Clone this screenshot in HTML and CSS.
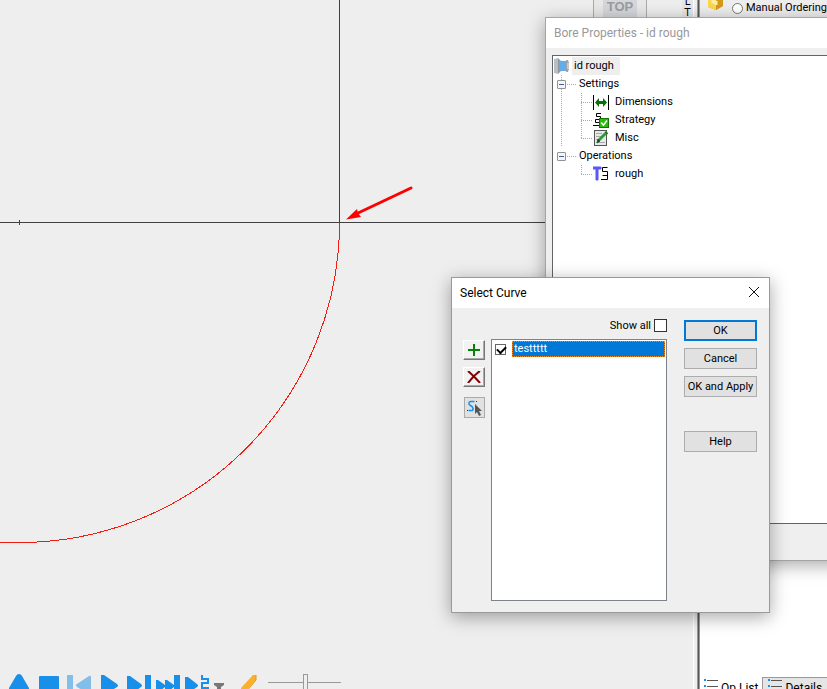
FILE: index.html
```
<!DOCTYPE html>
<html lang="en">
<head>
    <meta charset="UTF-8">
    <title>Bore Properties - id rough</title>
    <link rel="stylesheet" href="styles.css">
</head>
<body>
    <div class="app">
        <main class="viewport">
            <svg class="drawing" aria-hidden="true">
                <g stroke="#404040" fill="none" shape-rendering="crispEdges">
                    <path d="M0 222.5H700M339.5 0V222M19.5 220V225"/>
                </g>
                <path d="M339.5 222.5A320 320 0 0 1 19.5 542.5H0" fill="none" stroke="#f21c10" shape-rendering="crispEdges"/>
                <path d="M411 188L357 213.500" stroke="#f00" stroke-width="3" stroke-linecap="round"/>
                <path d="M346 219.500L357 209L358 213L361 217Z" fill="#f00"/>
            </svg>
            <div class="view-bar">
                <button class="view-cube">TOP</button>
                <div class="strip"><span>L</span><span>T</span></div>
            </div>
            <div class="playback">
                <button aria-label="Home"><svg width="20" height="24"><path d="M10 0Q12 0 13 2L20 14V17H0V14L7 2Q8 0 10 0Z"/></svg></button>
                <button aria-label="Stop"><svg width="20" height="24"><rect y="2" width="20" height="20" rx="1"/></svg></button>
                <button aria-label="Rewind" disabled><svg width="24" height="24"><path d="M0 1h6v20H0zM24 3V21L10 13Q8 11 10 10L22 2Q24 1 24 3Z"/></svg></button>
                <button aria-label="Play"><svg width="17" height="24"><path d="M0 1H3L16 10Q18 12 16 13L2 22H0Z"/></svg></button>
                <button aria-label="Step"><svg width="24" height="24"><path d="M0 2H3L14 10Q16 12 14 13L2 22H0ZM18 1h6v20h-6z"/></svg></button>
                <button aria-label="Fast forward"><svg width="24" height="24"><path d="M0 6H2L9 11V6H11L18 11V1H24V21H18V13L9 20V13L0 20Z"/></svg></button>
                <button aria-label="Play operation"><svg width="24" height="24"><path d="M0 3H3L12 10Q14 12 12 13L2 20H0Z"/><path d="M16 2H18M17 1V5H23V9H17V14H24" fill="none" stroke="#188fe8" stroke-width="2"/></svg></button>
                <button aria-label="Tool"><svg width="10" height="24"><path d="M0 9h10v2L7 13v6H3V13L0 11z" fill="#777"/></svg></button>
                <button class="pencil" aria-label="Edit"><svg width="16" height="24"><path d="M12 1H15V6L4 18H0V14Z" fill="#fbb02d"/><path d="M15 1V6L5 18" fill="none" stroke="#e29612"/></svg></button>
                <input class="speed" type="range" min="0" max="100" value="52" aria-label="Speed">
            </div>
        </main>
        <div class="splitter"></div>
        <aside class="panel">
            <div class="ordering">
                <svg width="17" height="18" viewBox="0 0 17 18"><path d="M1 3L9 0L16 3V13L9 17L1 14Z" fill="#e7ae20"/><path d="M1 3L9 6V17L1 14Z" fill="#fcd64b"/><path d="M9 6L16 3V13L9 17Z" fill="#d59a1a"/><path d="M6 3V9Q8 10 9 8V12" fill="none" stroke="#fff0a8" stroke-width="3"/></svg>
                <label><input type="radio" name="order">Manual Ordering</label>
            </div>
            <div class="operations"></div>
            <div class="tabs">
                <button class="tab active"><svg width="14" height="12"><path d="M0 0h2v2H0zM0 6h2v2H0z" fill="#188fe8"/><path d="M3 1.500h11M3 7.500h11" stroke="#555"/></svg>Op List</button>
                <button class="tab"><svg width="14" height="12"><path d="M0 0h2v2H0zM0 6h2v2H0z" fill="#188fe8"/><path d="M3 1.500h11M3 7.500h11" stroke="#555"/></svg>Details</button>
            </div>
        </aside>
    </div>

    <section class="window bore">
        <header class="titlebar">Bore Properties - id rough</header>
        <div class="tree">
            <div class="row root">
                <svg width="16" height="16"><path d="M0 1L4 0V16L0 15Z" fill="#b8bec4"/><path d="M4 0L6 2V14L4 16Z" fill="#8f979f"/><path d="M5 2L8 3H12V13H8L5 14Z" fill="#61aee8"/><path d="M12 2h2l1 3v6l-1 3h-2z" fill="#a0a4aa"/><path d="M14 5v6" stroke="#eee"/></svg>
                <span class="selected">id rough</span>
            </div>
            <ul class="groups">
                <li class="group linked">
                    <div class="row"><button class="toggle" aria-label="Collapse Settings"></button><span class="lead"></span>Settings</div>
                    <ul>
                        <li class="row leaf"><span class="branch"></span><svg width="16" height="16"><path d="M.5 1V16M15.500 1V16" stroke="#000"/><path d="M2 8.500L6 4V7H10V4L14 8.500L10 13V10H6V13Z" fill="#087008"/></svg>Dimensions</li>
                        <li class="row leaf"><span class="branch"></span><svg width="16" height="16"><path d="M8 1.500H3.500V4.500H7.500V7.500H2.500V10.500H6.500V13.500H0" fill="none" stroke="#000"/><rect x="6.500" y="6.500" width="9" height="9" fill="#2cbd0c" stroke="#147500"/><path d="M8 10.500L10.500 13L14 8.500" fill="none" stroke="#fff" stroke-width="1.500"/></svg>Strategy</li>
                        <li class="row leaf last"><span class="branch"></span><svg width="16" height="16"><rect x="1.500" y=".5" width="12" height="15" fill="#e8e8e8" stroke="#555"/><path d="M3 3.500H9M3 6.500H9M3 9.500H6M3 12.500H12" stroke="#aaa"/><path d="M4 13L5 9L13 1L15 3L7 11Z" fill="#2d9b36"/><path d="M4 13L5 9L7 11ZM12 2L15 4" fill="#222" stroke="#166b20"/></svg>Misc</li>
                    </ul>
                </li>
                <li class="group">
                    <div class="row"><button class="toggle" aria-label="Collapse Operations"></button><span class="lead"></span>Operations</div>
                    <ul>
                        <li class="row leaf last"><span class="branch"></span><svg width="16" height="16"><path d="M0 1H8V3H5V14H3V3H0Z" fill="#5957ff" stroke="#5957ff"/><path d="M14.500 1.500H9.500V5.500H14.500V9.500H9.500M14.500 9V13.500H8" fill="none" stroke="#000"/></svg>rough</li>
                    </ul>
                </li>
            </ul>
        </div>
    </section>

    <section class="window dialog">
        <header class="titlebar">Select Curve
            <button class="close" aria-label="Close"><svg width="10" height="10"><path d="M0 0L10 10M10 0L0 10" stroke="#111"/></svg></button>
        </header>
        <div class="dialog-body">
            <div class="tools">
                <button class="tool" aria-label="Add"><svg width="12" height="12"><path d="M6 0V12M0 6H12" stroke="#078207" stroke-width="2"/></svg></button>
                <button class="tool" aria-label="Delete"><svg width="14" height="12"><path d="M1 0Q8 6 13 12M13 0Q7 4 1 12" fill="none" stroke="#800000" stroke-width="2"/></svg></button>
                <button class="tool flat" aria-label="Pick curve"><svg width="16" height="16"><path d="M7.500 1.500H4Q1.500 1.500 2 4Q3 5.500 5 6.500Q7 9 5.500 10.500H1.500" fill="none" stroke="#188fe8" stroke-width="1.500"/><path d="M9 1h1v1H9zM0 10h1v1H0z" fill="#333"/><path d="M8 4V14L10 12L12 16L14 15L12 11H15Z" fill="#555"/></svg></button>
            </div>
            <div class="curves">
                <label class="show-all">Show all <input type="checkbox"></label>
                <div class="list">
                    <div class="item"><input type="checkbox" id="curve" checked><label for="curve">testtttt</label></div>
                </div>
            </div>
            <div class="actions">
                <button class="btn primary">OK</button>
                <button class="btn">Cancel</button>
                <button class="btn">OK and Apply</button>
                <button class="btn help">Help</button>
            </div>
        </div>
    </section>
</body>
</html>
```
FILE: styles.css
```
* {
    box-sizing: border-box;
}
html, body {
    height: 100%;
}
body {
    margin: 0;
    overflow: hidden;
    position: relative;
    background: #eee;
    color: #000;
    font-family: Roboto, "Noto Sans", sans-serif;
    font-size: 11px;
    line-height: 18px;
}
button, input {
    font: inherit;
    color: inherit;
    margin: 0;
}
button {
    padding: 0;
    border: 0;
    background: none;
}
svg {
    display: block;
    flex: none;
}
ul {
    list-style: none;
    margin: 0;
    padding: 0;
}

/* main application */
.app {
    display: flex;
    height: 100%;
}
.viewport {
    flex: 1;
    min-width: 0;
    position: relative;
    display: flex;
    flex-direction: column;
    justify-content: space-between;
    overflow: hidden;
}
.drawing {
    position: absolute;
    inset: 0;
    width: 100%;
    height: 100%;
}
.view-bar {
    display: flex;
    justify-content: flex-end;
    height: 20px;
    gap: 35px;
}
.view-cube {
    width: 54px;
    height: 20px;
    border: solid #aaa;
    border-width: 0 1px;
    background: linear-gradient(90deg, #e8e8e8 9px, #d5d7da 9px 43px, #e8e8e8 43px);
    color: #999ca1;
    font: bold 13px/1 "Liberation Sans", sans-serif;
    padding-bottom: 18px;
}
.strip {
    display: flex;
    flex-direction: column;
    width: 11px;
    margin-top: -4px;
    background: #e6e6e6;
    font: 10px/11px "DejaVu Sans", sans-serif;
    text-align: center;
}
.playback {
    position: relative;
    display: flex;
    gap: 9px;
    height: 15px;
    padding-left: 9px;
    fill: #188fe8;
}
.playback button {
    align-self: flex-start;
    flex: none;
}
.playback button:nth-child(2) {
    margin-left: 1px;
}
.playback button:nth-child(3) {
    margin-left: -1px;
}
.playback button:nth-child(4) {
    margin-left: 1px;
}
.playback button:nth-child(5) ~ button {
    margin-left: -4px;
}
.playback button:nth-child(8) ~ .pencil {
    margin: 0 2px 0 8px;
}
.playback button:disabled {
    opacity: .5;
}
.speed {
    appearance: none;
    width: 73px;
    height: 16px;
    background: linear-gradient(#999, #999) 0 8px / 100% 1px no-repeat;
}
.speed::-webkit-slider-thumb {
    appearance: none;
    width: 5px;
    height: 16px;
    border: 1px solid #999;
    background: #eee;
}
.splitter {
    width: 7px;
    background: linear-gradient(90deg, #fff 1px, #eee 1px 4px, #999 4px 5px, #555 5px 6px, #999 6px);
}
.panel {
    width: 127px;
    display: flex;
    flex-direction: column;
    background: #fff;
    white-space: nowrap;
    overflow: hidden;
}
.ordering {
    display: flex;
    gap: 8px;
    height: 30px;
    padding-left: 7px;
    margin-top: -7px;
    background: #eee;
}
.ordering label {
    display: flex;
    align-items: center;
    gap: 3px;
}
.ordering input {
    appearance: none;
    width: 11px;
    height: 11px;
    border: 1px solid #777;
    border-radius: 50%;
    background: #fff;
}
.operations {
    flex: 1;
}
.tabs {
    display: flex;
    height: 12px;
}
.tab {
    display: flex;
    gap: 3px;
    height: 24px;
    padding: 2px 4px;
    font-size: 12px;
}
.tab:not(.active) {
    flex: 1;
    padding: 1px 5px;
    border: solid #999;
    border-width: 1px 0 0 1px;
    background: #e5e5e5;
}

/* floating windows */
.window {
    position: absolute;
    display: flex;
    flex-direction: column;
    border: 1px solid #a5a5a5;
    background: #efefef;
    box-shadow: 0 4px 17px rgba(0, 0, 0, .35);
}
.titlebar {
    display: flex;
    justify-content: space-between;
    align-items: center;
    height: 30px;
    padding: 0 8px;
    background: #fff;
    font-size: 12px;
}
.bore {
    left: 545px;
    top: 17px;
    right: -40px;
    bottom: 128px;
}
.bore .titlebar {
    color: #999;
}
.tree {
    flex: 1;
    margin: 7px 0 36px 6px;
    padding: 1px;
    border: 1px solid #646464;
    background: #fff;
}
.row {
    display: flex;
    align-items: center;
    height: 18px;
}
.root {
    gap: 2px;
}
.selected {
    padding: 0 6px 0 2px;
    background: #eee;
}
.groups {
    padding-left: 3px;
}
.group.linked {
    background: repeating-linear-gradient(#aaa 0 1px, transparent 1px 2px) 4px 0 / 1px 100% no-repeat;
}
.toggle {
    width: 9px;
    height: 9px;
    border: 1px solid #929292;
    border-radius: 1px;
    background: linear-gradient(#3f5fa0, #3f5fa0) center / 5px 1px no-repeat #f5f5f5;
}
.lead {
    width: 10px;
    height: 1px;
    margin: 0 2px 0 1px;
    background: repeating-linear-gradient(90deg, #aaa 0 1px, transparent 1px 2px);
}
.leaf {
    gap: 6px;
    padding-left: 24px;
}
.branch {
    width: 12px;
    height: 18px;
    margin-right: -6px;
    background:
        repeating-linear-gradient(#aaa 0 1px, transparent 1px 2px) 0 0 / 1px 100% no-repeat,
        repeating-linear-gradient(90deg, #aaa 0 1px, transparent 1px 2px) 0 9px / 100% 1px no-repeat;
}
.last .branch {
    background-size: 1px 9px, 100% 1px;
}

/* curve dialog */
.dialog {
    left: 451px;
    top: 277px;
    width: 319px;
    height: 336px;
    border-color: #999;
}
.close {
    padding: 2px 2px 4px;
}
.dialog-body {
    flex: 1;
    display: grid;
    grid-template-columns: 22px 1fr 73px;
    padding: 10px 12px 11px 11px;
}
.tools {
    display: flex;
    flex-direction: column;
    gap: 7px;
    padding-top: 22px;
}
.tool {
    display: flex;
    align-items: center;
    justify-content: center;
    height: 20px;
    border: 1px solid;
    border-color: #fff #777 #777 #fff;
    box-shadow: inset -1px -1px #aaa;
    background: #f2f2f2;
}
.flat {
    height: 21px;
    margin: 3px 0 0 1px;
    border-color: #aaa;
    background: #e1e1e1;
    box-shadow: none;
}
.curves {
    display: flex;
    flex-direction: column;
    margin: 0 17px 0 6px;
}
.show-all {
    display: flex;
    align-items: center;
    justify-content: flex-end;
    gap: 3px;
    height: 15px;
    margin-bottom: 6px;
}
input[type="checkbox"] {
    appearance: none;
    width: 13px;
    height: 13px;
    border: 1px solid #333;
    background: #fff;
}
.list {
    flex: 1;
    padding: 1px;
    border: 1px solid #7e828b;
    background: #fff;
}
.item {
    display: flex;
    align-items: center;
    gap: 6px;
    height: 16px;
    padding-left: 2px;
}
.item input[type="checkbox"] {
    width: 11px;
    height: 11px;
    border-color: #666;
}
.item input:checked::before {
    content: "";
    display: block;
    width: 7px;
    height: 4px;
    margin: 1px;
    border: solid #000;
    border-width: 0 0 2px 2px;
    transform: rotate(-45deg);
}
.item label {
    flex: 1;
    height: 16px;
    padding-left: 2px;
    outline: 1px dotted #f28a27;
    outline-offset: -1px;
    background: #0078d7;
    color: #fff;
    line-height: 16px;
}
.actions {
    display: flex;
    flex-direction: column;
    gap: 7px;
    padding-top: 2px;
}
.btn {
    height: 21px;
    border: 1px solid #adadad;
    background: #e1e1e1;
    white-space: nowrap;
}
.primary {
    border: 2px solid #0078d7;
}
.help {
    margin-top: 27px;
}
```
